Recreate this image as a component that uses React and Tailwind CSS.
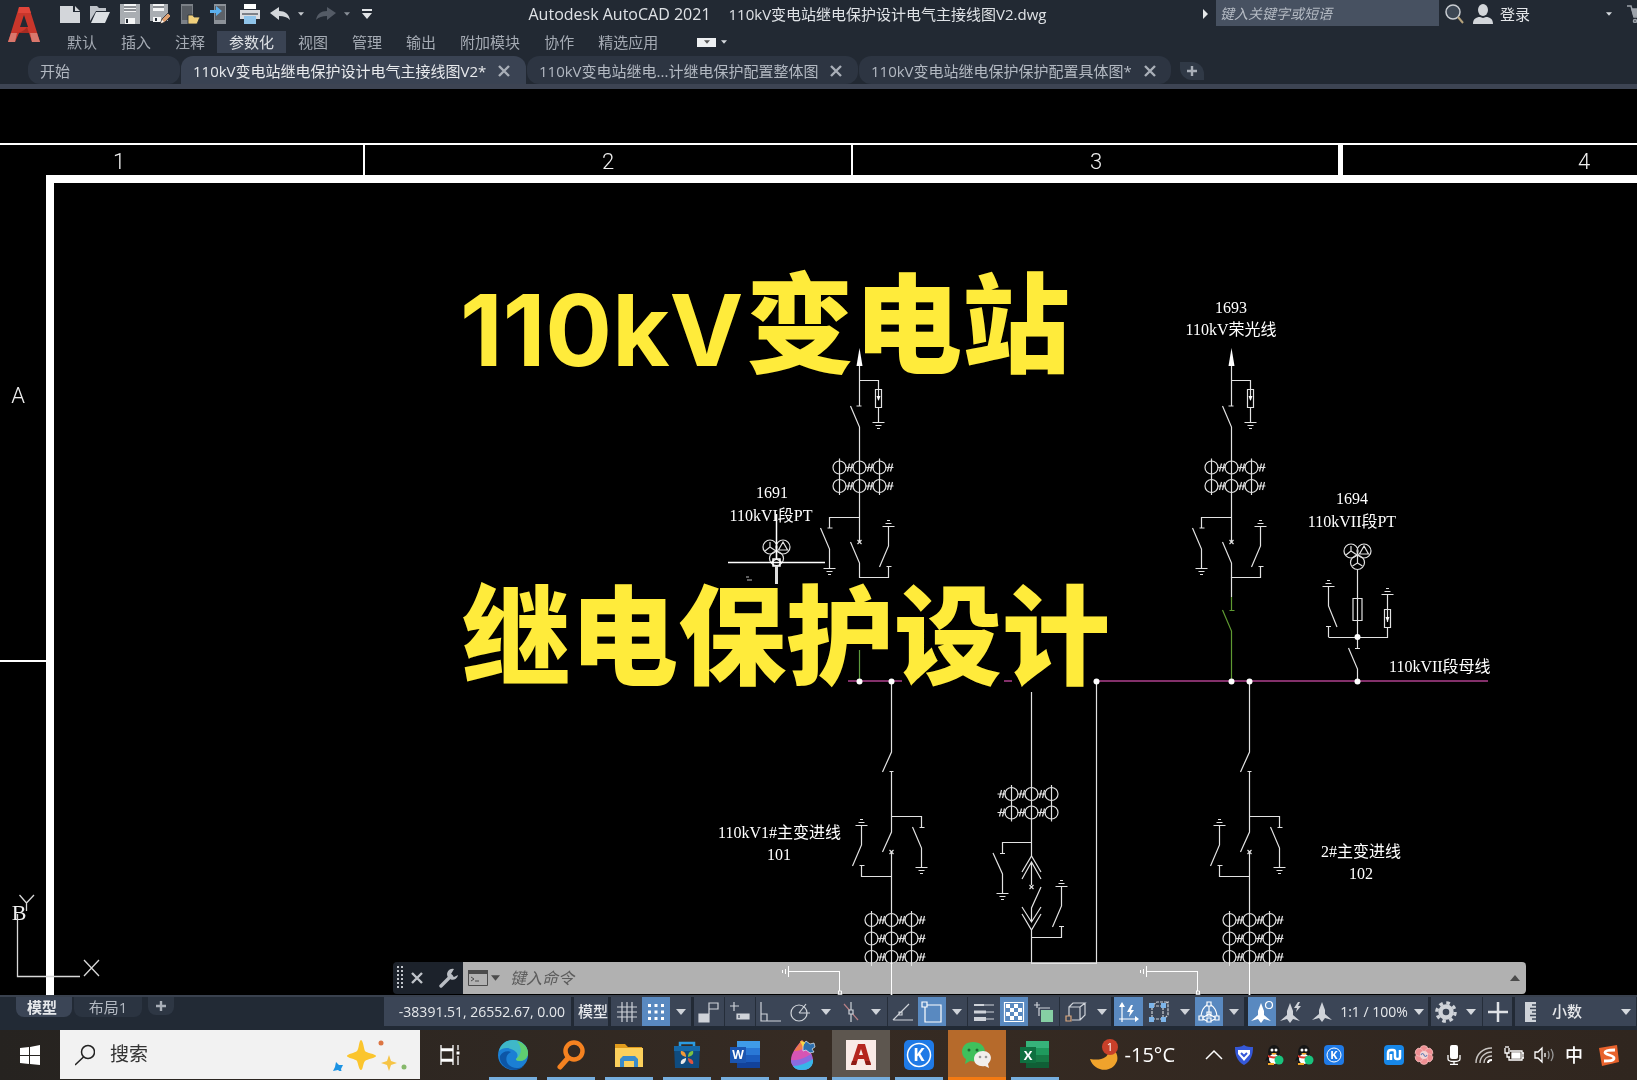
import { Fragment } from "react";

const UI_FONT = "font-['Open_Sans','Noto_Sans_CJK_SC',sans-serif]";

const RIBBON_TABS = ["默认", "插入", "注释", "参数化", "视图", "管理", "输出", "附加模块", "协作", "精选应用"];

const FILE_TABS = [
  { label: "开始", width: "w-[152px]", closable: false },
  { label: "110kV变电站继电保护设计电气主接线图V2*", width: "w-[345px]", closable: true, active: true },
  { label: "110kV变电站继电...计继电保护配置整体图", width: "w-[331px]", closable: true },
  { label: "110kV变电站继电保护保护配置具体图*", width: "w-[312px]", closable: true },
];

function Caret({ className = "h-[6px] w-[10px] text-[#d5d9de]" }) {
  return (
    <svg viewBox="0 0 10 6" className={className} fill="currentColor">
      <path d="M0 0h10L5 6z" />
    </svg>
  );
}

function CloseIcon({ className = "h-3 w-3 text-[#a9afb8]" }) {
  return (
    <svg viewBox="0 0 12 12" className={className} fill="none" stroke="currentColor" strokeWidth="2.4">
      <path d="M1 1l10 10M11 1L1 11" />
    </svg>
  );
}

function PlusIcon() {
  return (
    <svg viewBox="0 0 12 12" className="h-3 w-3" fill="none" stroke="#a9afb8" strokeWidth="2.4">
      <path d="M6 1v10M1 6h10" />
    </svg>
  );
}

/* ---------- title bar ---------- */

function AutocadLogo() {
  return (
    <svg viewBox="0 0 32 37" className="h-[37px] w-8 shrink-0">
      <path d="M0 36L11 1h10l11 35h-8l-3-9H11l-4 9z" fill="#c9362b" />
      <path d="M16 9l4 12h-8z" fill="#222933" />
      <path d="M11 1h10l2 6H10z" fill="#e0453a" />
      <path d="M0 36l3-9h6l-2 9zM24 36l-2-9h7l3 9z" fill="#d9776c" />
      <path d="M7 27c5 0 9-2 12-6l2 6z" fill="#a62b22" />
    </svg>
  );
}

const QUICK_ICONS = [
  {
    name: "新建",
    art: <path d="M0 2h13v6h7v11H0zM15 2l5 5h-5z" fill="#d3d6da" />,
  },
  {
    name: "打开",
    art: (
      <>
        <path d="M0 2h7l2 2h7v3H6L0 17z" fill="#bfc3c9" />
        <path d="M6 8h14l-5 11H1z" fill="#dcdfe3" />
      </>
    ),
  },
  {
    name: "保存",
    art: (
      <>
        <path d="M0 0h20v20H0z" fill="#a9adb2" />
        <path d="M4 0h12v8H4zM5 14h10v6H5z" fill="#f4f5f6" />
        <path d="M4 3h12M4 6h12" stroke="#222933" />
        <path d="M6 15h2v4H6z" fill="#222933" />
      </>
    ),
  },
  {
    name: "另存为",
    art: (
      <>
        <path d="M0 0h18v17H0z" fill="#a9adb2" />
        <path d="M3 0h11v7H3zM3 13h8v5H3z" fill="#f4f5f6" />
        <path d="M3 3h11" stroke="#222933" />
        <path d="M5 14h2v3H5z" fill="#222933" />
        <path d="M10 20l2-5 6-6 3 3-6 6z" fill="#e0a070" stroke="#222933" strokeWidth=".8" />
        <path d="M11 19l1-3 2 2z" fill="#fff" />
      </>
    ),
  },
  {
    name: "从移动设备打开",
    art: (
      <>
        <path d="M1 0h12v20H1z" fill="#7b8087" />
        <path d="M2 2h10v14H2z" fill="#565b62" />
        <path d="M8 11h5l1 2h6l-3 7H8z" fill="#f0cf7c" stroke="#222933" strokeWidth=".8" />
      </>
    ),
  },
  {
    name: "保存到移动设备",
    art: (
      <>
        <path d="M4 0h12v20H4z" fill="#8c9198" />
        <path d="M5 2h10v14H5z" fill="#5c6168" />
        <path d="M0 6h6V2l6 5-6 5V9H0z" fill="#5bb0ee" />
      </>
    ),
  },
  {
    name: "打印",
    art: (
      <>
        <path d="M4 0h12v5H4z" fill="#fff" />
        <path d="M0 6h20v9H0z" fill="#d9dcdf" />
        <path d="M4 12h12v8H4z" fill="#8fc4ea" />
        <path d="M2 10h16" stroke="#222933" />
      </>
    ),
  },
];

function QuickAccess() {
  return (
    <div className="flex items-center">
      <div className="flex items-center gap-[10px]">
        {QUICK_ICONS.map((icon) => (
          <button key={icon.name} aria-label={icon.name}>
            <svg viewBox="0 0 20 20" className="h-5 w-5">
              {icon.art}
            </svg>
          </button>
        ))}
        <button aria-label="放弃">
          <svg viewBox="0 0 20 14" className="h-[14px] w-5">
            <path d="M0 6l9-6v4c6 0 10 3 11 9-3-3-6-4-11-4v4z" fill="#d3d6da" />
          </svg>
        </button>
      </div>
      <Caret className="ml-2 h-1 w-[6px] text-[#c5c9ce]" />
      <button className="ml-3" aria-label="重做">
        <svg viewBox="0 0 20 14" className="h-[14px] w-5">
          <path d="M20 6l-9-6v4C5 4 1 7 0 13c3-3 6-4 11-4v4z" fill="#545b66" />
        </svg>
      </button>
      <Caret className="ml-2 h-1 w-[6px] text-[#8a9099]" />
      <button className="ml-3" aria-label="自定义快速访问工具栏">
        <svg viewBox="0 0 10 10" className="h-[10px] w-[10px]" fill="#e1e3e6">
          <path d="M0 0h10v2H0zM0 4h10L5 10z" />
        </svg>
      </button>
    </div>
  );
}

function TitleBar() {
  return (
    <header className="relative h-14 shrink-0 overflow-hidden bg-[#222933]">
      <div className="absolute left-2 top-[6px]">
        <AutocadLogo />
      </div>
      <div className="flex h-7 items-center pl-15">
        <QuickAccess />
        <div className="mx-auto flex items-center gap-[18px] whitespace-nowrap text-[15px] text-[#dfe2e6]">
          <span className="text-[16px]">Autodesk AutoCAD 2021</span>
          <span>110kV变电站继电保护设计电气主接线图V2.dwg</span>
        </div>
        <div className="flex h-full w-[434px] shrink-0 items-center">
          <svg viewBox="0 0 5 10" className="mr-2 h-[10px] w-[5px]" fill="#e6e8ea">
            <path d="M0 0l5 5-5 5z" />
          </svg>
          <input
            aria-label="搜索帮助"
            placeholder="键入关键字或短语"
            className="h-[26px] w-[223px] self-start bg-[#475161] px-1 text-[14px] italic text-white outline-none placeholder:text-[#b4bac3]"
          />
          <svg viewBox="0 0 20 20" className="ml-[6px] h-5 w-5" fill="none">
            <circle cx="8" cy="8" r="7" fill="#3c4653" stroke="#c9cdd2" strokeWidth="1.5" />
            <path d="M13 13l5 6" stroke="#b5a27c" strokeWidth="2" />
          </svg>
          <button className="ml-2 flex items-center gap-[7px] text-[15px] text-[#e4e6e9]">
            <svg viewBox="0 0 20 20" className="h-5 w-5" fill="#d3d6da">
              <ellipse cx="10" cy="6" rx="5" ry="6" />
              <path d="M0 20c0-5 3-7 7-7l3 1 3-1c4 0 7 2 7 7z" />
            </svg>
            登录
          </button>
          <Caret className="ml-auto h-1 w-[6px] text-[#d5d9de]" />
          <svg viewBox="0 0 22 18" className="-mr-3 ml-[15px] h-[18px] w-[22px] shrink-0" fill="none" stroke="#9da3ab" strokeWidth="1.5">
            <path d="M0 1h4l3 11h12" />
            <path d="M5 4h16l-3 7H7z" fill="#9da3ab" />
            <circle cx="8" cy="16" r="1.5" />
            <circle cx="17" cy="16" r="1.5" />
          </svg>
        </div>
      </div>
      <nav className="flex h-7 items-center pl-[55px] text-[15px] text-[#a5abb4]">
        {RIBBON_TABS.map((tab) => (
          <button
            key={tab}
            className={`flex h-[22px] items-center px-3 ${tab === "参数化" ? "bg-[#3a4353] text-[#dde0e4]" : ""}`}
          >
            {tab}
          </button>
        ))}
        <button className="ml-[27px] flex items-center gap-[5px]" aria-label="最小化功能区">
          <span className="flex h-[9px] w-[19px] items-center justify-center bg-[#eef0f2]">
            <Caret className="h-1 w-[6px] text-[#555]" />
          </span>
          <Caret className="h-1 w-[6px] text-[#d5d9de]" />
        </button>
      </nav>
    </header>
  );
}

function FileTabs() {
  return (
    <div className="flex h-[33px] shrink-0 items-start border-b-[5px] border-[#3d4453] bg-[#222933] pl-7 text-[15px]">
      {FILE_TABS.map((tab) => (
        <div
          key={tab.label}
          className={`mr-px flex h-7 items-center gap-3 whitespace-nowrap rounded-t-[12px] pl-3 pt-[2px] ${tab.width} ${
            tab.active ? "bg-[#3a4353] text-[#e8eaed]" : "rounded-b-[12px] bg-[#2d3542] text-[#b3b9c2]"
          }`}
        >
          <button className="h-full">{tab.label}</button>
          {tab.closable ? (
            <button aria-label={`关闭 ${tab.label}`}>
              <CloseIcon />
            </button>
          ) : null}
        </div>
      ))}
      <button className="ml-2 mt-[6px] flex h-[18px] w-6 items-center justify-center rounded-bl-[12px] rounded-tr-[12px] bg-[#303946]" aria-label="新图形">
        <PlusIcon />
      </button>
    </div>
  );
}

/* ---------- drawing symbols ---------- */

// earth symbol, dir is the side the bars point to
function Ground({ x, y, dir = "down" }) {
  const turn = { down: 0, up: 180, left: 90 }[dir];
  return <path d="M-6 0H6M-3 3H3M-1.5 6H1.5" transform={`translate(${x} ${y}) rotate(${turn})`} />;
}

// current transformers: one row of three coils for each y
function Coils({ x, rows, side = "right" }) {
  const top = rows[0] - 9;
  const bottom = rows[rows.length - 1] + 9;
  return (
    <g>
      {[-20, 20].map((dx) => (
        <path key={dx} d={`M${x + dx} ${top}V${bottom}`} />
      ))}
      {rows.map((y) =>
        [-20, 0, 20].map((dx) => {
          const hx = side === "right" ? x + dx + 6 : x + dx - 14;
          return (
            <Fragment key={`${y}-${dx}`}>
              <circle cx={x + dx} cy={y} r="6.5" />
              <path d={`M${hx} ${y}h8M${hx + 2} ${y + 4}l2-8M${hx + 5} ${y + 4}l2-8`} />
            </Fragment>
          );
        })
      )}
    </g>
  );
}

function Cross({ x, y }) {
  return <path d={`M${x - 2} ${y - 2}l4 4M${x + 2} ${y - 2}l-4 4`} />;
}

function Node({ x, y = 681.5 }) {
  return <circle cx={x} cy={y} r="3" fill="#fff" stroke="none" />;
}

// 110kV line bay above the bus
function LineBay({ x, covered = false }) {
  return (
    <g>
      <path d={`M${x} 348l3 18h-6z`} fill="#fff" stroke="none" />
      <path d={`M${x} 366V406M${x - 3} 406h5M${x - 9} 406l9 21V542M${x} 380.5h19V400`} />
      <path d={`M${x + 16} 389.5h6v18h-6zM${x + 19} 407V422`} />
      <path d={`M${x + 17} 396h4l-2 5z`} fill="#fff" stroke="none" />
      <Ground x={x + 19} y={422.5} />
      <Coils x={x} rows={[467.5, 486]} />
      <path d={`M${x} 517.5h-30V528M${x - 32} 528h5M${x - 39} 528l9 21V568`} />
      <Ground x={x - 30} y={568.5} />
      <Cross x={x} y={542} />
      <path d={`M${x - 9} 542l9 21V577.5H${x + 29}V567M${x + 27} 566.5h5M${x + 20} 567l9-21V526`} />
      <Ground x={x + 29} y={526.5} dir="up" />
      {covered ? (
        <path d={`M${x} 650V681`} stroke="#5c9a3c" />
      ) : (
        <>
          <path d={`M${x} 577V597`} />
          <path d={`M${x} 597V610M${x - 2} 610.5h5M${x - 9} 610l9 21V681`} stroke="#5f9a32" />
        </>
      )}
    </g>
  );
}

// main transformer bay below the bus
function TransformerBay({ x }) {
  return (
    <g>
      <path d={`M${x} 681V752l-9 20M${x - 2} 771.5h4M${x} 772V832l-9 20`} />
      <path d={`M${x} 816.5h30V827M${x + 28} 827.5h5M${x + 21} 827l9 21V867`} />
      <Ground x={x + 30} y={867.5} />
      <Cross x={x} y={852} />
      <path d={`M${x} 852V996M${x} 876.5h-30V866M${x - 32} 865.5h5M${x - 39} 866l9-21V826`} />
      <Ground x={x - 30} y={825.5} dir="up" />
      <Coils x={x} rows={[920, 938.5, 957]} />
      <g stroke="#fff" strokeWidth="1.6">
        <Ground x={x - 103} y={971.5} dir="left" />
        <path d={`M${x} 962V996M${x - 103} 971.5h51V991M${x - 53} 991h3v3h-3z`} />
      </g>
    </g>
  );
}

function BusCoupler() {
  return (
    <g>
      <path d="M1031.5 692V856M1031.5 842.5H1002.5V853M1000 853.5h5M993 853l9.500 21V893" />
      <Ground x={1002.5} y={893.5} />
      <Coils x={1031.5} rows={[794, 812.5]} side="left" />
      <path d="M1022 872l9.5-16 9.5 16M1022 879l9.5-17 9.5 17M1031.5 862V885" />
      <Cross x={1031.5} y={887} />
      <path d="M1041 887l-9.5 21V922M1022 907l9.5 15 9.5-15M1022 914l9.5 16 9.5-16M1031.5 930V963.5H1096.5V681" />
      <path d="M1031.5 937.5H1061.5V927M1059 926.5h5M1052.5 927l9-21V887" />
      <Ground x={1061.5} y={886.5} dir="up" />
    </g>
  );
}

function VoltageCoils({ x, y }) {
  return (
    <g>
      <circle cx={x - 6.5} cy={y} r="7" />
      <circle cx={x + 6.5} cy={y} r="7" />
      <circle cx={x} cy={y + 11.5} r="7" />
      <path d={`M${x - 6.5} ${y - 5}v5l-5 4M${x - 6.5} ${y}l6 4M${x + 6.5} ${y - 5}l-4.5 8h9z`} />
      <path d={`M${x} ${y + 4}v8l-5 3M${x} ${y + 12}l5 3`} />
    </g>
  );
}

function PtBay() {
  return (
    <g>
      <VoltageCoils x={1357.5} y={551} />
      <path d="M1357.5 570V648M1353 598.5h9v22h-9zM1328.5 637.5H1387.5V628M1328.5 637V627M1326 626.5h5M1337 627l-8.500-21V587" />
      <Ground x={1328.5} y={586.5} dir="up" />
      <path d="M1384.5 609.5h6v18h-6zM1387.5 622V595" />
      <path d="M1385.5 617h4l-2 5z" fill="#fff" stroke="none" />
      <Ground x={1387.5} y={594.5} dir="up" />
      <path d="M1355 648.5h5M1348.5 648l9 21V681" />
      <Node x={1357.5} y={637} />
    </g>
  );
}

const LABELS = [
  { text: "1691", x: 772, y: 498, anchor: "middle" },
  { text: "110kVI段PT", x: 771, y: 521, anchor: "middle" },
  { text: "1693", x: 1231, y: 313, anchor: "middle" },
  { text: "110kV荣光线", x: 1231, y: 335, anchor: "middle" },
  { text: "1694", x: 1352, y: 504, anchor: "middle" },
  { text: "110kVII段PT", x: 1352, y: 527, anchor: "middle" },
  { text: "110kVII段母线", x: 1389, y: 672, anchor: "start" },
  { text: "110kV1#主变进线", x: 718, y: 838, anchor: "start" },
  { text: "101", x: 779, y: 860, anchor: "middle" },
  { text: "2#主变进线", x: 1321, y: 857, anchor: "start" },
  { text: "102", x: 1361, y: 879, anchor: "middle" },
];

const FRAME_MARKS = [
  { text: "1", x: 119, y: 169 },
  { text: "2", x: 608, y: 169 },
  { text: "3", x: 1096, y: 169 },
  { text: "4", x: 1584, y: 169 },
  { text: "A", x: 18, y: 403 },
];

function Drawing() {
  return (
    <svg viewBox="0 89 1637 906" preserveAspectRatio="xMinYMin slice" className="absolute inset-0 h-full w-full">
      {/* sheet frame */}
      <g fill="#fff">
        <path d="M0 143h1637v2H0zM46 175h1591v8H46zM46 175h8v820h-8zM363 145h2v30h-2zM851 145h2v30h-2zM1338 145h5v30h-5zM0 660h46v2H0z" />
      </g>
      <g fill="#f0f0f0" textAnchor="middle" className="font-[Roboto,sans-serif] text-[22px] font-light">
        {FRAME_MARKS.map((m) => (
          <text key={m.text} x={m.x} y={m.y}>
            {m.text}
          </text>
        ))}
      </g>
      <text x="19" y="920" textAnchor="middle" fill="#f0f0f0" className="font-['Liberation_Serif',serif] text-[22px]">
        B
      </text>

      {/* UCS icon */}
      <path d="M17.5 914V976.5H80M19.5 895l7 8 7.5-8M26.5 903v8M84 960l15 16M99 960l-15 16" fill="none" stroke="#d8d8d8" strokeWidth="1.3" />

      {/* bus bars */}
      <path d="M848 681h54M1004 681h8M1096 681h392" stroke="#83306a" strokeWidth="2" />

      <g fill="none" stroke="#e2e2e2" strokeWidth="1.2">
        <LineBay x={859.5} covered />
        <LineBay x={1231.5} />
        <PtBay />
        <VoltageCoils x={776.5} y={547} />
        <TransformerBay x={891.5} />
        <TransformerBay x={1249.5} />
        <BusCoupler />
      </g>
      <Node x={859.5} />
      <Node x={891.5} />
      <Node x={1096.5} />
      <Node x={1231.5} />
      <Node x={1249.5} />
      <Node x={1357.5} />

      {/* crosshair */}
      <path d="M776.5 514V558M728 562.5H825M773 559h7v7h-7z" fill="none" stroke="#fff" strokeWidth="1.5" />
      <path d="M776.5 566V584" stroke="#ddd" strokeWidth="3" />
      <path d="M746 577h3M747 580h5" stroke="#bbb" />

      <g fill="#fff" className="font-['Liberation_Serif','Noto_Sans_CJK_SC',serif] text-[16px]">
        {LABELS.map((l) => (
          <text key={l.text} x={l.x} y={l.y} textAnchor={l.anchor}>
            {l.text}
          </text>
        ))}
      </g>

      <g fill="#ffeb3b" className="text-[108px]">
        <text x="460" y="366" className="font-[Inter,sans-serif] text-[99px] font-bold">
          110kV
        </text>
        <text x="746" y="364" className="font-['Noto_Sans_CJK_SC',sans-serif] font-black">
          变电站
        </text>
        <text x="462" y="676" className="font-['Noto_Sans_CJK_SC',sans-serif] font-black">
          继电保护设计
        </text>
      </g>
    </svg>
  );
}

function CommandLine() {
  return (
    <div className="absolute bottom-px left-[24%] right-[111px] flex h-8">
      <div className="flex w-[70px] shrink-0 items-center rounded-l bg-[#1c222b]">
        <svg viewBox="0 0 6 24" className="ml-1 h-6 w-[6px]" stroke="#c3c7cd" strokeWidth="2" strokeDasharray="2 2">
          <path d="M1 0v24M5 0v24" />
        </svg>
        <button className="ml-2" aria-label="关闭">
          <CloseIcon className="h-3 w-3 text-[#bfc3c9]" />
        </button>
        <button className="ml-4" aria-label="自定义">
          <svg viewBox="0 0 20 20" className="h-5 w-5">
            <path d="M2 18L12 8" stroke="#b9bdc3" strokeWidth="3.4" strokeLinecap="round" />
            <path d="M15 1a5.5 5.5 0 1 0 4 6l-4 2-3-3z" fill="#b9bdc3" />
          </svg>
        </button>
      </div>
      <div className="relative flex-1">
        <div className="absolute inset-0 rounded-r bg-[#b1b1b1] mix-blend-lighten" />
        <div className="relative flex h-full items-center pl-[5px] pr-[6px]">
          <svg viewBox="0 0 20 16" className="h-4 w-5" fill="none" stroke="#4b4b4b">
            <path d="M.5.5h19v15H.5zM3 7l3 2-3 2M7 11h4" />
            <path d="M0 0h20v4H0z" fill="#4b4b4b" stroke="none" />
          </svg>
          <Caret className="ml-[3px] h-[6px] w-[9px] text-[#4b4b4b]" />
          <input
            aria-label="命令"
            placeholder="键入命令"
            className="ml-[10px] h-full min-w-0 flex-1 bg-transparent px-0 text-[16px] italic text-[#333] outline-none placeholder:text-[#5c5c5c]"
          />
          <button aria-label="命令历史">
            <Caret className="h-[6px] w-[10px] rotate-180 text-[#4b4b4b]" />
          </button>
        </div>
      </div>
    </div>
  );
}

/* ---------- status bar ---------- */

const compass = "M10 0l3 8v4l7 6-7-2-3 4-3-4-7 2 7-6V8z";

const STATUS_GROUPS = [
  [
    { name: "栅格", width: "w-[31px]", art: <path d="M5 0v20M10 0v20M15 0v20M0 5h20M0 10h20M0 15h20" /> },
    {
      name: "捕捉",
      width: "w-7",
      on: true,
      art: <path d="M2 3.5h16M2 10h16M2 16.5h16" strokeWidth="3" strokeDasharray="3 3.5" />,
    },
    { name: "捕捉设置", width: "w-[21px]", caret: true },
  ],
  [
    {
      name: "推断约束",
      width: "w-[31px]",
      edge: true,
      art: (
        <>
          <path d="M0 12h10v8H0z" fill="currentColor" />
          <path d="M10 12V1h9v6h-9" />
        </>
      ),
    },
    {
      name: "动态输入",
      width: "w-[31px]",
      edge: true,
      art: (
        <>
          <path d="M4 0v9M0 4h9" />
          <path d="M7 12h12v5H7z" fill="currentColor" />
          <path d="M9 13v3" stroke="#3b4556" />
        </>
      ),
    },
    { name: "正交", width: "w-[29px]", art: <path d="M0 0v19h20M0 12h6v7" /> },
    {
      name: "极轴",
      width: "w-[29px]",
      art: (
        <>
          <circle cx="9" cy="11" r="8" />
          <path d="M9 11h11M9 11l7-9" />
        </>
      ),
    },
    { name: "极轴设置", width: "w-6", caret: true },
    {
      name: "等轴测",
      width: "w-[26px]",
      art: (
        <>
          <path d="M10 0v20" />
          <path d="M3 2l14 16" stroke="#b98085" />
          <path d="M8 8h4v4H8z" fill="#3b4556" />
        </>
      ),
    },
    { name: "等轴测设置", width: "w-6", caret: true, edge: true },
    { name: "对象追踪", width: "w-[30px]", art: <path d="M0 18h20M0 18L16 2M6 10h3v3H6z" /> },
    {
      name: "对象捕捉",
      width: "w-7",
      on: true,
      art: <path d="M0 0h5v5H0zM5 3h14v17H3V5" />,
    },
    { name: "捕捉选项", width: "w-[22px]", caret: true, edge: true },
    {
      name: "线宽",
      width: "w-8",
      art: (
        <>
          <path d="M10 3h10M10 10h10M10 17h10" />
          <path d="M0 3h10" strokeWidth="2" />
          <path d="M0 10h12" strokeWidth="3" />
          <path d="M0 17h12" strokeWidth="4" />
        </>
      ),
    },
    {
      name: "透明度",
      width: "w-7",
      on: true,
      art: (
        <>
          <path d="M.5.5h19v19H.5z" />
          <path d="M2 4h16M2 12h16" strokeWidth="4" strokeDasharray="4 4" />
          <path d="M6 8h12M6 16h12" strokeWidth="4" strokeDasharray="4 4" />
        </>
      ),
    },
    {
      name: "选择循环",
      width: "w-8",
      edge: true,
      art: (
        <>
          <path d="M3 0v6M0 3h6M5 14V6h11" />
          <path d="M7 8h12v12H7z" fill="#86cfa4" stroke="none" />
        </>
      ),
    },
    {
      name: "三维对象捕捉",
      width: "w-8",
      art: (
        <>
          <path d="M3 14V5h11v13H6M3 5l4-4h12l-5 4M19 1v12l-5 5" />
          <path d="M0 14h5v5H0z" stroke="#dca77c" />
        </>
      ),
    },
    { name: "三维捕捉选项", width: "w-[19px]", caret: true },
  ],
  [
    {
      name: "动态 UCS",
      width: "w-[29px]",
      on: true,
      art: (
        <>
          <path d="M3 20V3M0 17h17" />
          <path d="M0 5l3-5 3 5zM16 14l4 3-4 3zM12 3l-4 7h3l-1 5 5-7h-3l2-5z" fill="currentColor" stroke="none" />
        </>
      ),
    },
    {
      name: "选择过滤",
      width: "w-8",
      art: (
        <>
          <path d="M3 4h11v13H3zM14 3l5-3v13l-4 4M4 3l4-3h11" strokeDasharray="3 1" />
          <path d="M0 1h5v5H0zM12 1h5v5h-5zM0 15h5v5H0zM12 15h5v5h-5z" fill="#7db5ea" stroke="none" />
        </>
      ),
    },
    { name: "过滤选项", width: "w-5", caret: true },
    {
      name: "小控件",
      width: "w-7",
      on: true,
      art: (
        <>
          <path d="M8 0h4v4H8zM10 4v8l-7 4M10 12l7 4M8 10h4v4H8zM0 14h4v4H0zM16 14h4v4h-4zM8 16h4v4H8z" />
          <path d="M8 3q-5 3-6 11M12 3q5 3 6 11M4 17l4 2M16 17l-4 2" />
        </>
      ),
    },
    { name: "小控件选项", width: "w-[21px]", caret: true },
  ],
];

const ANNOTATION = [
  {
    name: "注释可见性",
    width: "w-7",
    on: true,
    art: (
      <>
        <path d={compass} fill="currentColor" stroke="none" transform="translate(-1 1)" />
        <circle cx="17" cy="3" r="3.5" />
      </>
    ),
  },
  {
    name: "自动缩放",
    width: "w-8",
    art: (
      <>
        <path d={compass} fill="currentColor" stroke="none" transform="translate(-2 1)" />
        <path d="M16 0l-4 6h3l-1 4 5-6h-3l2-4z" fill="currentColor" stroke="none" />
      </>
    ),
  },
  { name: "注释比例", width: "w-7", art: <path d={compass} fill="currentColor" stroke="none" /> },
];

function StatusButton({ item }) {
  return (
    <button
      aria-label={item.name}
      className={`flex h-full shrink-0 items-center justify-center ${item.width} ${
        item.on ? "bg-[#5989c0] text-white" : "text-[#cfd3d9]"
      } ${item.edge ? "border-r border-[#252d39]" : ""}`}
    >
      {item.caret ? (
        <Caret className="h-[6px] w-[10px]" />
      ) : (
        <svg viewBox="0 0 20 20" className="h-5 w-5 overflow-visible" fill="none" stroke="currentColor" strokeWidth="1.2">
          {item.art}
        </svg>
      )}
    </button>
  );
}

function StatusBar() {
  return (
    <div className="flex h-[35px] shrink-0 items-start border-t-2 border-[#39414e] bg-[#222a35] text-[15px] text-[#e6e8eb]">
      <div className="flex pl-4">
        <button className="h-5 w-14 rounded-b-lg bg-[#3b4556] pr-1 font-bold leading-5">模型</button>
        <button className="ml-[2px] h-5 w-[68px] rounded-b-lg bg-[#2b3441] leading-5 text-[#b3b9c2]">布局1</button>
        <button className="ml-[6px] flex h-[18px] w-[26px] items-center justify-center rounded-b-lg bg-[#2e3744]" aria-label="新建布局">
          <PlusIcon />
        </button>
      </div>
      <div className="ml-auto flex h-[29px] gap-[3px] pr-px">
        <button className="flex w-[187px] items-center justify-end whitespace-nowrap bg-[#3b4556] pr-[6px] text-[14px] font-medium">
          -38391.51, 26552.67, 0.00
        </button>
        <button className="flex w-[34px] items-center justify-end bg-[#3b4556] font-medium">模型</button>
        {STATUS_GROUPS.map((group, i) => (
          <div key={i} className="flex bg-[#3b4556]">
            {group.map((item) => (
              <StatusButton key={item.name} item={item} />
            ))}
          </div>
        ))}
        <div className="ml-px flex bg-[#3b4556]">
          {ANNOTATION.map((item) => (
            <StatusButton key={item.name} item={item} />
          ))}
          <button className="flex w-[92px] items-center justify-center gap-[6px] whitespace-nowrap text-[14px]">
            1:1 / 100%
            <Caret />
          </button>
        </div>
        <div className="flex bg-[#3b4556]">
          <button className="flex w-[52px] items-center justify-between border-r border-[#252d39] pl-1 pr-[6px]" aria-label="切换工作空间">
            <svg viewBox="-10 -10 20 20" className="h-[22px] w-[22px]" fill="none" stroke="#cfd3d9">
              <circle r="5" strokeWidth="4" />
              <circle r="8.3" strokeWidth="3" strokeDasharray="3.3 3.22" />
            </svg>
            <Caret />
          </button>
          <button className="flex w-[29px] items-center justify-center" aria-label="注释监视器">
            <svg viewBox="0 0 20 20" className="h-5 w-5" stroke="#dfe2e6" strokeWidth="2.5">
              <path d="M10 0v20M0 10h20" />
            </svg>
          </button>
        </div>
        <button className="flex w-[121px] items-center bg-[#3b4556] pl-[10px] pr-[5px] font-medium">
          <svg viewBox="0 0 11 20" className="mr-4 h-5 w-[11px]">
            <path d="M0 0h11v20H0z" fill="#cfd3d9" />
            <path d="M7 3h4M5 6.5h6M7 10h4M5 13.5h6M7 17h4" stroke="#3b4556" strokeWidth="1.5" />
          </svg>
          小数
          <Caret className="ml-auto h-[6px] w-[10px] text-[#d5d9de]" />
        </button>
      </div>
    </div>
  );
}

/* ---------- taskbar ---------- */

const TASKBAR_APPS = [
  {
    name: "Edge",
    art: (
      <>
        <circle cx="15" cy="15" r="15" fill="#1b7fd4" />
        <path d="M1 11C3 3 9 0 15 0c9 0 15 6 15 13 0 5-4 8-8 8-3 0-4-1-4-2 2-2 2-5 0-7-5-5-13-5-17-1z" fill="#3fb8c8" />
        <path d="M19 1c7 2 11 7 11 12 0 5-4 8-8 8-3 0-4-1-4-2 4-3 8-9 1-18z" fill="#5fce70" />
        <path d="M13 12c-5 2-6 8-3 12 4 5 11 5 16 2-4 4-10 5-15 3-6-2-10-8-9-13 2-4 7-6 11-4z" fill="#0d56a6" />
      </>
    ),
  },
  {
    name: "Everything",
    art: (
      <g fill="none" stroke="#f58220">
        <circle cx="18" cy="11" r="8.5" strokeWidth="4.5" />
        <path d="M12 18L4 27" strokeWidth="5" strokeLinecap="round" />
      </g>
    ),
  },
  {
    name: "文件资源管理器",
    art: (
      <>
        <path d="M1 4h10l3 3h14v4H1z" fill="#e09b1c" />
        <path d="M1 8h28v19H1z" fill="#fcd05c" />
        <path d="M6 27v-8l3-3h12l3 3v8h-4v-6H10v6z" fill="#3a8bcb" />
      </>
    ),
  },
  {
    name: "应用商店",
    art: (
      <>
        <path d="M8 6V3h14v3" fill="none" stroke="#2c9be0" strokeWidth="2.5" />
        <path d="M2 6h26l-1 22H3z" fill="#0f4c80" />
        <path d="M2 6h26v5H2z" fill="#1568a8" />
        <path d="M14 17c-4-1-6-3-5-6 3 0 5 2 5 6z" fill="#f29a38" />
        <path d="M16 17c0-4 2-6 5-6 1 3-1 5-5 6z" fill="#7cc142" />
        <path d="M14 18c0 4-2 6-5 6-1-3 1-5 5-6z" fill="#e9e9e9" />
        <path d="M16 18c4 1 6 3 5 6-3 0-5-2-5-6z" fill="#e2543e" />
      </>
    ),
  },
  {
    name: "Word",
    art: (
      <>
        <path d="M7 1h23v7H7z" fill="#3f9be8" />
        <path d="M7 8h23v7H7z" fill="#2a78d6" />
        <path d="M7 15h23v7H7z" fill="#1a5bbd" />
        <path d="M7 22h23v6H7z" fill="#12429a" />
        <path d="M0 7h16v16H0z" fill="#1b55b0" />
        <text x="8" y="19" textAnchor="middle" fill="#fff" className="text-[12px] font-bold">
          W
        </text>
      </>
    ),
  },
  {
    name: "Paint 3D",
    art: (
      <>
        <path d="M14 0C9 6 3 13 3 20c0 6 5 10 11 10s11-4 11-10c0-7-7-14-11-20z" fill="#d655b4" />
        <path d="M3 20c6 1 14-2 20-6 3 8 2 16-9 16-7 0-11-5-11-10z" fill="#8a6be0" />
        <path d="M5 26c7 0 14-3 20-7 1 8-5 11-11 11-4 0-7-1-9-4z" fill="#38b6e8" />
        <path d="M14 0l-8 11c7 0 10-3 13-5z" fill="#f07a4a" />
        <path d="M15 5l3-4 4 3 4-1 1 4-3 2 2 3-4 1-4-3-3 1z" fill="#2d6fae" stroke="#e8f0f8" strokeWidth=".7" />
        <path d="M12 1l5 1-2 5z" fill="#f6d743" />
      </>
    ),
  },
  {
    name: "AutoCAD",
    cell: "bg-[#5d564f]",
    art: (
      <>
        <path d="M0 0h30v30H0z" fill="#f9eae6" />
        <path d="M5 25L12 4h7l6 21h-5l-2-6h-6l-2 6z" fill="#b5261e" />
        <path d="M15 9l2 6h-4z" fill="#f9eae6" />
        <path d="M5 25l1-4h5l-1 4zM20 25l-1-4h5l1 4z" fill="#8e1c16" />
      </>
    ),
  },
  {
    name: "酷狗音乐",
    art: (
      <>
        <rect width="30" height="30" rx="5" fill="#1f7ae6" />
        <circle cx="15" cy="15" r="11.5" fill="none" stroke="#fff" strokeWidth="1.5" />
        <text x="15" y="21" textAnchor="middle" fill="#fff" className="text-[17px] font-bold">
          K
        </text>
      </>
    ),
  },
  {
    name: "微信",
    cell: "bg-[#b66a2b]",
    bar: "bg-[#f47a12]",
    art: (
      <>
        <path d="M11 2C4 2 0 6 0 12c0 3 2 6 4 7l-1 5 5-3c9 2 15-3 15-9 0-6-5-10-12-10z" fill="#3fc05c" />
        <circle cx="7" cy="10" r="1.5" fill="#1d6b32" />
        <circle cx="15" cy="10" r="1.5" fill="#1d6b32" />
        <path d="M21 11c-5 0-9 3-9 8s5 8 11 7l4 2-1-4c6-6 2-13-5-13z" fill="#f1efec" />
        <circle cx="18" cy="17" r="1.3" fill="#999" />
        <circle cx="24" cy="17" r="1.3" fill="#999" />
      </>
    ),
  },
  {
    name: "Excel",
    art: (
      <>
        <path d="M6 1h23v7H6z" fill="#36b37a" />
        <path d="M6 8h23v7H6z" fill="#1f9a5d" />
        <path d="M6 15h23v7H6z" fill="#167a45" />
        <path d="M6 22h23v6H6z" fill="#105f36" />
        <path d="M0 7h16v16H0z" fill="#0f7040" />
        <text x="8" y="20" textAnchor="middle" fill="#fff" className="text-[13px] font-bold">
          X
        </text>
      </>
    ),
  },
];

function Penguin() {
  return (
    <>
      <ellipse cx="10" cy="7" rx="6" ry="7" fill="#161616" />
      <path d="M4 10l-3 6 3-1v3h12l1-8z" fill="#161616" />
      <ellipse cx="10" cy="14" rx="5" ry="5" fill="#fff" />
      <circle cx="8" cy="5" r="1.5" fill="#fff" />
      <circle cx="12" cy="5" r="1.5" fill="#fff" />
      <path d="M7 8h6l-3 2z" fill="#f5a623" />
      <path d="M4 10c4 2 8 2 12 0v2c-4 2-8 2-12 0z" fill="#e23b2e" />
      <path d="M4 18h6v2H4z" fill="#f5a623" />
      <circle cx="15" cy="15" r="4.5" fill="#19c37d" />
    </>
  );
}

const TRAY = [
  { name: "显示隐藏的图标", art: <path d="M2 14l8-8 8 8" fill="none" stroke="#fff" strokeWidth="1.5" /> },
  {
    name: "安全中心",
    art: (
      <>
        <path d="M10 0c3 2 6 2 9 2 0 8-2 14-9 18C3 16 1 10 1 2c3 0 6 0 9-2z" fill="#3558d8" />
        <path d="M4 5h12v4l-6 7-6-7z" fill="#fff" />
        <path d="M7 8l3 3 3-3" fill="none" stroke="#3558d8" strokeWidth="2" />
      </>
    ),
  },
  { name: "QQ 1", art: <Penguin /> },
  { name: "QQ 2", art: <Penguin /> },
  {
    name: "酷狗",
    art: (
      <>
        <rect width="20" height="20" rx="4" fill="#1f7ae6" />
        <circle cx="10" cy="10" r="7" fill="none" stroke="#fff" />
        <text x="10" y="14" textAnchor="middle" fill="#fff" className="text-[11px] font-bold">
          K
        </text>
      </>
    ),
  },
  { name: "空", art: null },
  {
    name: "连接",
    art: (
      <>
        <rect width="20" height="20" rx="4" fill="#1787e8" />
        <path d="M4 15V8q0-3 3-3h2q2 0 2 2v5q0 2 2 2h1q2 0 2-2V5M7 9v6" fill="none" stroke="#fff" strokeWidth="2.5" />
      </>
    ),
  },
  {
    name: "浏览",
    art: (
      <>
        {[0, 60, 120, 180, 240, 300].map((a) => (
          <circle key={a} cx="10" cy="4.5" r="4" fill="#ef8f93" stroke="#f8c9c8" strokeWidth=".6" transform={`rotate(${a} 10 10)`} />
        ))}
        <circle cx="10" cy="10" r="4" fill="#f3d5d5" />
        <path d="M7 10q1.5-3 3 0t3 0" fill="none" stroke="#6b7fb5" strokeWidth="1.2" />
      </>
    ),
  },
  {
    name: "麦克风",
    art: (
      <>
        <rect x="6" y="0" width="8" height="14" rx="2" fill="#fff" />
        <path d="M4 10v4c0 2 2 2.5 6 2.5s6-.5 6-2.5v-4M10 16v4M6 19.5h8" fill="none" stroke="#fff" strokeWidth="1.3" />
      </>
    ),
  },
  {
    name: "网络",
    art: (
      <g fill="none" stroke="#c9c5c2" strokeWidth="1.4">
        <path d="M2 18C2 9 9 3 18 3M6 18c0-6 5-11 12-11M10 18c0-4 3-7 8-7" />
        <path d="M14 18c0-2 2-3 4-3" stroke="#fff" strokeWidth="2" />
      </g>
    ),
  },
  {
    name: "电源",
    art: (
      <g fill="none" stroke="#fff" strokeWidth="1.3">
        <path d="M6 6h12v9H5v-3M18 8h2v5h-2M1 3v5h4V3M2 3V1M4 3V1M3 8v4h3" />
        <path d="M8 8h8v5H8z" fill="#fff" />
      </g>
    ),
  },
  {
    name: "音量",
    art: (
      <g fill="none" stroke="#fff" strokeWidth="1.3">
        <path d="M1 7h3l4-4v14l-4-4H1zM11 8v4" />
        <path d="M14 6q2 4 0 8M17 4q4 6 0 12" stroke="#999" />
      </g>
    ),
  },
];

function Taskbar() {
  return (
    <footer className="flex h-[50px] shrink-0 items-stretch bg-linear-to-r from-[#262320] via-[#362b23] to-[#30261f]">
      <button className="flex w-15 items-center justify-center" aria-label="开始">
        <svg viewBox="0 0 20 20" className="h-5 w-5" fill="#fff">
          <path d="M0 3l9-1v8H0zM10 2l10-2v10H10zM0 11h9v8l-9-1zM10 11h10v9l-10-1z" />
        </svg>
      </button>
      <label className="mb-px flex w-90 items-center bg-[#f2f2f2] pl-[15px]">
        <svg viewBox="0 0 20 22" className="h-[22px] w-5 shrink-0" fill="none" stroke="#222" strokeWidth="1.5">
          <circle cx="13" cy="8" r="6.5" />
          <path d="M8.5 13L0 21" />
        </svg>
        <input
          aria-label="搜索"
          placeholder="搜索"
          className="ml-[15px] w-0 min-w-0 flex-1 bg-transparent text-[19px] outline-none placeholder:text-[#333]"
        />
        <svg viewBox="0 0 80 32" className="mr-[10px] h-8 w-20">
          <path d="M31 1c2 0 3 9 4 11s11 3 11 5-9 3-11 5-2 9-4 9-3-7-4-9-10-3-10-5 8-3 10-5 2-11 4-11z" fill="#fbc52d" />
          <path d="M59 16l2 6 6 2-6 2-2 6-2-6-6-2 6-2z" fill="#f6c445" />
          <path d="M6 23l3 3 4 0-2 4 1 4-4-3-5 1 2-4z" fill="#1c93e3" />
          <circle cx="51" cy="4" r="2.5" fill="#dc7542" />
          <circle cx="74" cy="28" r="2.5" fill="#86b86b" />
        </svg>
      </label>
      <button className="flex w-16 items-center pl-5" aria-label="任务视图">
        <svg viewBox="0 0 20 20" className="h-5 w-5" fill="none" stroke="#fff" strokeWidth="1.3">
          <path d="M1 0v4h12V0M1 5.500h12v9H1zM1 20v-4h12v4M18 0v5M18 11v9" />
          <path d="M16.5 6.5h3v3h-3z" fill="#fff" stroke="none" />
        </svg>
      </button>
      {TASKBAR_APPS.map((app) => (
        <button
          key={app.name}
          aria-label={app.name}
          className={`flex w-[58px] shrink-0 flex-col items-center justify-end ${app.cell ?? ""}`}
        >
          <svg viewBox="0 0 30 30" className="mb-[7px] h-[30px] w-[30px]">
            {app.art}
          </svg>
          <span className={`h-[3px] ${app.cell ? "w-full" : "w-12"} ${app.bar ?? "bg-[#76aede]"}`} />
        </button>
      ))}
      <div className="ml-auto flex items-center pr-2">
        <button className="flex items-center gap-[6px] whitespace-nowrap text-[20px] text-white">
          <svg viewBox="0 0 32 32" className="h-8 w-8">
            <path d="M18 6c8 8 1 17-15 14 4 13 22 15 27 2 2-7-3-14-12-16z" fill="#f0a32c" />
            <circle cx="23" cy="8" r="8" fill="#c8402a" />
            <text x="23" y="12" textAnchor="middle" fill="#fff" className="text-[11px]">
              1
            </text>
          </svg>
          -15°C
        </button>
        <div className="ml-6 flex">
          {TRAY.map((item) =>
            item.art ? (
              <button key={item.name} aria-label={item.name} className="flex w-[30px] justify-center">
                <svg viewBox="0 0 20 20" className="h-5 w-5">
                  {item.art}
                </svg>
              </button>
            ) : (
              <span key={item.name} className="w-[30px]" />
            )
          )}
        </div>
        <button className="w-[30px] text-[18px] font-medium text-white">中</button>
        <button className="flex w-10 justify-center" aria-label="搜狗输入法">
          <svg viewBox="0 0 22 22" className="h-[22px] w-[22px]">
            <path d="M1 4l18-3 2 17-17 4z" fill="#e8622c" />
            <path d="M17 6c-4 0-10 0-10 2.5S16 11 16 14s-5 3-10 3" fill="none" stroke="#fff" strokeWidth="2.8" />
          </svg>
        </button>
      </div>
    </footer>
  );
}

export default function App() {
  return (
    <div className={`flex h-screen flex-col overflow-hidden bg-black ${UI_FONT}`}>
      <TitleBar />
      <FileTabs />
      <main className="relative min-h-0 flex-1 overflow-hidden bg-black">
        <Drawing />
        <CommandLine />
      </main>
      <StatusBar />
      <Taskbar />
    </div>
  );
}
